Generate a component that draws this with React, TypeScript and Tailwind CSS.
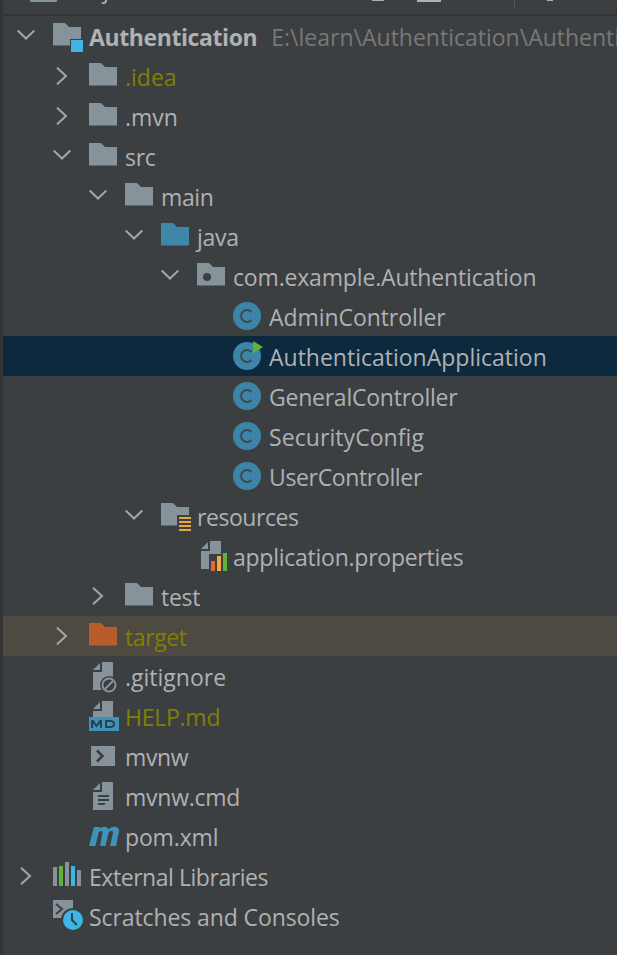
import React from "react";

const Chevron = ({ open }: { open: boolean }) => (
  <svg width="18" height="18" viewBox="0 0 18 18" fill="none" stroke="#a4a6a8" strokeWidth="2">
    {open ? <path d="M0.700 3.500 L9 11.500 L17.300 3.500" /> : <path d="M4 0.700 L13 9 L4 17.300" />}
  </svg>
);

const Folder = ({ color = "#87939a", children }: { color?: string; children?: React.ReactNode }) => (
  <svg width="28" height="28" viewBox="0 0 28 28" className="overflow-visible">
    <path d="M0 1 H12 L16 5 H28 V23.500 H0 Z" fill={color} />
    {children}
  </svg>
);

const Mod = () => (
  <Folder>
    <path d="M17 17 H31 V31 H17 Z" fill="#3c3f41" />
    <rect x="18" y="18" width="12" height="12" fill="#3fb5e5" />
  </Folder>
);

const ClassIcon = ({ run }: { run?: boolean }) => (
  <svg width="28" height="28" viewBox="0 0 28 28" className="overflow-visible">
    <circle cx="14" cy="14" r="14" fill="#3d85a8" />
    <path d="M18.500 10 A6 6 0 1 0 18.500 18" fill="none" stroke="#3b4a55" strokeWidth="2" />
    {run && <path d="M20 -1 L30 5 L20 11.500 Z" fill="#5fb339" />}
  </svg>
);

const FileBase = ({ children }: { children?: React.ReactNode }) => (
  <svg width="28" height="28" viewBox="0 0 28 28" className="overflow-visible">
    <path d="M4 8 L11 1 V8 Z M13 0 H24 V28 H4 V10 H13 Z" fill="#87939a" />
    {children}
  </svg>
);

const Icons: Record<string, React.ReactNode> = {
  mod: <Mod />,
  folder: <Folder />,
  java: <Folder color="#3f86a8" />,
  target: <Folder color="#b85c2b" />,
  pkg: (
    <Folder>
      <circle cx="10" cy="15" r="4" fill="#3c3f41" />
    </Folder>
  ),
  res: (
    <Folder>
      <path d="M16 13 H30 V30 H16 Z" fill="#3c3f41" />
      <path d="M18 15 H30 V17 H18 Z M18 19 H30 V21 H18 Z M18 23 H30 V25 H18 Z M18 27 H30 V29 H18 Z" fill="#e5a840" />
    </Folder>
  ),
  props: (
    <svg width="28" height="30" viewBox="0 0 28 30" className="overflow-visible">
      <path d="M4 8 L11 1 V8 Z M13 0 H24 V28 H4 V10 H13 Z" fill="#87939a" />
      <rect x="12" y="13" width="20" height="18" fill="#3c3f41" />
      <rect x="14" y="20" width="4" height="10" fill="#e8672b" />
      <rect x="20" y="15" width="4" height="15" fill="#f0a83c" />
      <rect x="26" y="12" width="4" height="18" fill="#5fb339" />
    </svg>
  ),
  ignore: (
    <FileBase>
      <circle cx="20" cy="23" r="9" fill="#3c3f41" />
      <circle cx="20" cy="23" r="6.500" fill="none" stroke="#87939a" strokeWidth="2" />
      <path d="M16 27 L24 19" stroke="#87939a" strokeWidth="2" />
    </FileBase>
  ),
  md: (
    <svg width="30" height="30" viewBox="0 0 30 30" className="overflow-visible">
      <path d="M4 8 L11 1 V8 Z M13 0 H24 V16 H4 V10 H13 Z" fill="#87939a" />
      <rect x="0" y="16" width="30" height="14" fill="#3d93b8" />
      <path d="M2 27 V19 H4.500 L7.500 23.500 L10.500 19 H13 V27 H11 V22.500 L7.500 26.500 L4 22.500 V27 Z M16 19 H21 Q26 19 26 23 Q26 27 21 27 H16 Z M18 21 V25 H21 Q24 25 24 23 Q24 21 21 21 Z" fill="#2f4150" />
    </svg>
  ),
  shell: (
    <svg width="28" height="28" viewBox="0 0 28 28">
      <rect x="2" y="4" width="24" height="20" fill="#87939a" />
      <path d="M8 8.500 L13.500 14 L8 19.500" fill="none" stroke="#3c3f41" strokeWidth="2.600" />
    </svg>
  ),
  text: (
    <FileBase>
      <path d="M9 13 H20 V15 H9 Z M9 17 H20 V19 H9 Z M9 21 H16 V23 H9 Z" fill="#3c3f41" />
    </FileBase>
  ),
  maven: (
    <svg width="32" height="24" viewBox="0 0 32 24" className="overflow-visible">
      <path
        d="M0 22 L5 3 H11 L10.500 5 C13 2 18 2 19.500 5.500 C22 2 31 1 30 8 L27 22 H21 L24 9 C24.500 6 20 6.500 19.500 9 L16.500 22 H11 L13.500 9 C14 6.500 10 6.500 9.500 9 L6.500 22 Z"
        fill="#3d93b8"
      />
    </svg>
  ),
  libs: (
    <svg width="28" height="28" viewBox="0 0 28 28">
      <rect x="0" y="5" width="4" height="19" fill="#87939a" />
      <rect x="6" y="4" width="4" height="20" fill="#5fb339" />
      <rect x="12" y="0" width="4" height="24" fill="#87939a" />
      <rect x="18" y="4" width="4" height="20" fill="#3fb5e5" />
      <rect x="24" y="8" width="4" height="16" fill="#87939a" />
    </svg>
  ),
  scratch: (
    <svg width="32" height="32" viewBox="0 0 32 32" className="overflow-visible">
      <rect x="0" y="0" width="20" height="18" fill="#87939a" />
      <path d="M3 4 L9 9 L3 14" fill="none" stroke="#3c3f41" strokeWidth="2" />
      <circle cx="20" cy="20" r="12" fill="#3c3f41" />
      <circle cx="20" cy="20" r="10" fill="#3fb5e5" />
      <path d="M19 13 V20 L24 25" fill="none" stroke="#3c3f41" strokeWidth="2" />
    </svg>
  ),
};

type Row = {
  d: number;
  icon: string;
  label: string;
  arrow?: "open" | "closed";
  tone?: string;
  bg?: string;
  bold?: boolean;
  fit?: string;
};

const rows: Row[] = [
  { d: 0, icon: "mod", label: "Authentication", arrow: "open", bold: true },
  { d: 1, icon: "folder", label: ".idea", arrow: "closed", tone: "text-[#808000]" },
  { d: 1, icon: "folder", label: ".mvn", arrow: "closed" },
  { d: 1, icon: "folder", label: "src", arrow: "open", fit: "tracking-[-0.3px]" },
  { d: 2, icon: "folder", label: "main", arrow: "open", fit: "tracking-[-0.4px]" },
  { d: 3, icon: "java", label: "java", arrow: "open", fit: "tracking-[-0.3px]" },
  { d: 4, icon: "pkg", label: "com.example.Authentication", arrow: "open", fit: "tracking-[-0.17px]" },
  { d: 5, icon: "class", label: "AdminController", fit: "tracking-[-0.07px]" },
  { d: 5, icon: "classrun", label: "AuthenticationApplication", bg: "bg-[#0d293e]" },
  { d: 5, icon: "class", label: "GeneralController", fit: "tracking-[-0.24px]" },
  { d: 5, icon: "class", label: "SecurityConfig", fit: "tracking-[0.07px]" },
  { d: 5, icon: "class", label: "UserController", fit: "tracking-[-0.35px]" },
  { d: 3, icon: "res", label: "resources", arrow: "open", fit: "tracking-[-0.45px]" },
  { d: 4, icon: "props", label: "application.properties", fit: "tracking-[-0.25px]" },
  { d: 2, icon: "folder", label: "test", arrow: "closed", fit: "tracking-[-0.25px]" },
  { d: 1, icon: "target", label: "target", arrow: "closed", tone: "text-[#808000]", bg: "bg-[#4d4a41]", fit: "tracking-[-0.4px]" },
  { d: 1, icon: "ignore", label: ".gitignore" },
  { d: 1, icon: "md", label: "HELP.md", tone: "text-[#808000]", fit: "tracking-[-0.25px]" },
  { d: 1, icon: "shell", label: "mvnw", fit: "tracking-[-0.4px]" },
  { d: 1, icon: "text", label: "mvnw.cmd", fit: "tracking-[-0.25px]" },
  { d: 1, icon: "maven", label: "pom.xml", fit: "tracking-[-0.15px]" },
  { d: 0, icon: "libs", label: "External Libraries", arrow: "closed", fit: "tracking-[-0.45px]" },
  { d: 0, icon: "scratch", label: "Scratches and Consoles", fit: "tracking-[-0.1px]" },
];

const TreeRow = ({ r }: { r: Row }) => (
  <div className={`flex h-10 items-center whitespace-nowrap ${r.bg ?? ""}`}>
    <div style={{ width: 14 + 36 * r.d }} className="shrink-0" />
    <div className="flex w-[18px] shrink-0 items-center justify-center">
      {r.arrow && <Chevron open={r.arrow === "open"} />}
    </div>
    <div className="ml-[18px] flex h-7 w-7 shrink-0 items-center justify-start">
      {r.icon === "class" ? <ClassIcon /> : r.icon === "classrun" ? <ClassIcon run /> : Icons[r.icon]}
    </div>
    <span
      className={`ml-2 pt-[2px] text-[23px] ${r.bold ? "font-bold tracking-[-0.4px]" : ""} ${r.fit ?? ""} ${r.tone ?? "text-[#afb1b3]"}`}
    >
      {r.label}
    </span>
    {r.bold && <span className="ml-[14px] pt-[2px] text-[23px] text-[#787878]">E:\learn\Authentication\Authentication</span>}
  </div>
);

export default function App() {
  return (
    <div className="flex h-[955px] w-[617px] overflow-hidden bg-[#3c3f41] font-['Open_Sans','Liberation_Sans',sans-serif]">
      <div className="w-[3px] shrink-0 bg-[#333537]" />
      <div className="min-w-0 flex-1">
        <div className="flex h-[14px] items-start overflow-hidden">
          <div className="ml-[27px] h-[2px] w-[27px] shrink-0 bg-[#87939a]" />
          <span className="ml-[9px] -mt-[28px] w-20 shrink-0 text-[23px] leading-[34px] text-[#afb1b3]">Project</span>
          <div className="ml-[226px] h-[1px] w-3 shrink-0 rounded-b-full bg-[#afb1b3]" />
          <div className="ml-[33px] h-[2px] w-6 shrink-0 bg-[#afb1b3]" />
          <div className="ml-[73px] h-2 w-px shrink-0 bg-[#55585a]" />
          <div className="ml-[32px] h-px w-[6px] shrink-0 bg-[#afb1b3]" />
        </div>
        <div className="h-[2px] bg-[#323232]" />
        {rows.map((r) => (
          <TreeRow key={r.label} r={r} />
        ))}
      </div>
    </div>
  );
}
